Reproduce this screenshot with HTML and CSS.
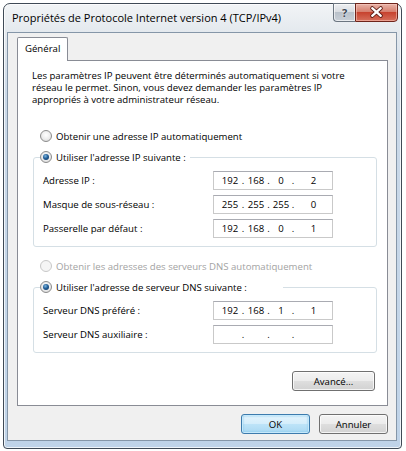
FILE: index.html
```html
<!DOCTYPE html>
<html lang="fr">
<head>
<meta charset="utf-8">
<title>Propriétés de Protocole Internet version 4 (TCP/IPv4)</title>
<link rel="stylesheet" href="styles.css">
</head>
<body>
<div class="window">
  <div class="titlebar">
    <span class="title">Propriétés de Protocole Internet version 4 (TCP/IPv4)</span>
    <div class="caption">
      <div class="cb help">?</div>
      <div class="cb close">
        <svg width="43" height="19" viewBox="0 0 43 19" aria-hidden="true">
          <path d="M17 5 L26 13 M26 5 L17 13" stroke="#5a1a12" stroke-width="4.2" stroke-linecap="round" fill="none"/>
          <path d="M17 5 L26 13 M26 5 L17 13" stroke="#ffffff" stroke-width="2.4" stroke-linecap="round" fill="none"/>
        </svg>
      </div>
    </div>
  </div>
  <div class="client">
    <div class="tabs"><div class="tab">Général</div></div>
    <div class="panel">
      <p class="intro">Les paramètres IP peuvent être déterminés automatiquement si votre<br>réseau le permet. Sinon, vous devez demander les paramètres IP<br>appropriés à votre administrateur réseau.</p>

      <div class="radio-row first"><span class="radio"></span><span>Obtenir une adresse IP automatiquement</span></div>

      <fieldset class="group">
        <legend><span class="radio checked"></span><span>Utiliser l'adresse IP suivante :</span></legend>
        <div class="rows">
          <div class="field"><span>Adresse IP :</span>
            <div class="ip"><span>192</span><span class="dot">.</span><span>168</span><span class="dot">.</span><span>0</span><span class="dot">.</span><span>2</span></div></div>
          <div class="field"><span>Masque de sous-réseau :</span>
            <div class="ip"><span>255</span><span class="dot">.</span><span>255</span><span class="dot">.</span><span>255</span><span class="dot">.</span><span>0</span></div></div>
          <div class="field"><span>Passerelle par défaut :</span>
            <div class="ip"><span>192</span><span class="dot">.</span><span>168</span><span class="dot">.</span><span>0</span><span class="dot">.</span><span>1</span></div></div>
        </div>
      </fieldset>

      <div class="radio-row dns disabled"><span class="radio off"></span><span>Obtenir les adresses des serveurs DNS automatiquement</span></div>

      <fieldset class="group">
        <legend class="wide"><span class="radio checked"></span><span>Utiliser l'adresse de serveur DNS suivante :</span></legend>
        <div class="rows">
          <div class="field"><span>Serveur DNS préféré :</span>
            <div class="ip"><span>192</span><span class="dot">.</span><span>168</span><span class="dot">.</span><span>1</span><span class="dot">.</span><span>1</span></div></div>
          <div class="field"><span>Serveur DNS auxiliaire :</span>
            <div class="ip"><span></span><span class="dot">.</span><span></span><span class="dot">.</span><span></span><span class="dot">.</span><span></span></div></div>
        </div>
      </fieldset>

      <div class="adv-row"><button class="btn adv">Avancé...</button></div>
    </div>
    <div class="footer">
      <button class="btn default">OK</button>
      <button class="btn">Annuler</button>
    </div>
  </div>
</div>
</body>
</html>
```

FILE: styles.css
```css
* { box-sizing: border-box; }
html, body { margin: 0; padding: 0; }
body {
  width: 406px;
  height: 451px;
  overflow: hidden;
  background: #ffffff;
  font-family: "Open Sans", "Noto Sans", sans-serif;
  font-size: 9.6px;
  color: #000;
}

.window {
  margin: 3px 0 0 3px;
  width: 399px;
  height: 446px;
  border: 1px solid #3f4a56;
  border-radius: 7px 7px 4px 4px;
  background: linear-gradient(180deg, #f2f4f6 0px, #e4e9ee 28px, #cbd9e8 90px, #bfd3e8 100%);
  box-shadow: inset 0 0 0 1px rgba(255,255,255,0.75);
  display: flex;
  flex-direction: column;
}

.titlebar {
  height: 28px;
  display: flex;
  align-items: flex-start;
  flex: none;
}
.title {
  flex: 1;
  padding-left: 8px;
  line-height: 28px;
  font-size: 11px;
  color: #000;
  white-space: nowrap;
}
.caption {
  display: flex;
  margin: -1px 3px 0 0;
}
.cb {
  height: 19px;
  display: flex;
  align-items: center;
  justify-content: center;
}
.help {
  width: 22px;
  border: 1px solid #6b7580;
  border-right: none;
  border-radius: 0 0 0 4px;
  background: linear-gradient(180deg, #eef0f2 0%, #d9dde2 45%, #b9c1ca 50%, #c9d0d8 100%);
  box-shadow: inset 0 0 0 1px rgba(255,255,255,0.6);
  font-weight: bold;
  font-size: 11px;
  color: #3c4652;
  text-shadow: 0 0 2px #fff;
}
.close {
  width: 43px;
  border: 1px solid #6e241b;
  border-radius: 0 0 4px 0;
  background: linear-gradient(180deg, #e8b3a8 0%, #d7806f 45%, #c7432f 50%, #d6705c 100%);
  box-shadow: inset 0 0 0 1px rgba(255,210,200,0.5);
}
.close svg { display: block; }

.client {
  margin: 0 4px 0 3px;
  width: 390px;
  height: 409px;
  flex: none;
  background: #f0f0f0;
  border: 1px solid #8596a8;
  padding: 4px 8px 0 9px;
}

.tabs {
  display: flex;
  margin-bottom: -1px;
}
.tab {
  position: relative;
  z-index: 1;
  width: 51px;
  height: 24px;
  background: #fff;
  border: 1px solid #898c95;
  border-bottom: none;
  border-radius: 2px 2px 0 0;
  padding: 4px 0 0 7px;
  line-height: 14px;
}

.panel {
  background: #fff;
  border: 1px solid #898c95;
  padding: 0 0 14px 0;
}

.intro {
  margin: 9px 0 0 14px;
  line-height: 12px;
}

.radio-row {
  display: flex;
  align-items: center;
  gap: 4px;
  height: 14px;
  padding-left: 22px;
}
.radio-row.first { margin-top: 23px; }
.radio-row.dns { margin-top: 12px; }
.radio-row.disabled { color: #a3a3a3; }

.radio {
  flex: none;
  width: 12px;
  height: 12px;
  border-radius: 50%;
  border: 1px solid #8c8c8c;
  background: radial-gradient(circle at 50% 40%, #ffffff 0%, #ececec 55%, #cdcdcd 100%);
}
.radio.checked::after {
  content: "";
  display: block;
  width: 6px;
  height: 6px;
  margin: 2px;
  border-radius: 50%;
  background: radial-gradient(circle at 40% 35%, #7fb8e0 0%, #245f98 45%, #0c3159 100%);
}
.radio.off {
  border-color: #c8c8c8;
  background: #f5f5f5;
}

.group {
  margin: 7px 10px 0 15px;
  padding: 7px 0 8px 6px;
  border: 1px solid #d5dfe5;
  border-radius: 3px;
  min-width: 0;
}
.group legend {
  display: flex;
  align-items: center;
  gap: 4px;
  height: 14px;
  padding: 0 4px 0 0;
}
.group legend.wide { padding-right: 36px; }

.rows {
  display: flex;
  flex-direction: column;
  gap: 5px;
  padding-left: 3px;
}
.field {
  display: grid;
  grid-template-columns: 170px 120px;
  align-items: center;
  height: 19px;
}
.ip {
  height: 19px;
  border: 1px solid #c9c9c9;
  border-top-color: #a9abb2;
  background: #fff;
  display: grid;
  grid-template-columns: 20px 6px 20px 5px 20px 4px 1fr;
  align-items: center;
  padding-left: 6px;
  line-height: 17px;
}
.ip span { text-align: center; }

.adv-row {
  display: flex;
  justify-content: flex-end;
  margin: 18px 12px 0 0;
}

.btn {
  height: 20px;
  width: 69px;
  padding: 0;
  font: inherit;
  color: #000;
  border: 1px solid #707070;
  border-radius: 3px;
  background: linear-gradient(180deg, #f4f4f4 0%, #ececec 48%, #dedede 52%, #d2d2d2 100%);
  box-shadow: inset 0 0 0 1px rgba(255,255,255,0.75);
}
.btn.adv { width: 83px; }
.btn.default {
  border-color: #3d7bad;
  background: linear-gradient(180deg, #e5f4fc 0%, #d4edfb 48%, #bde3f8 52%, #a9d8f2 100%);
  box-shadow: inset 0 0 0 1px #c6e9fb, inset 0 0 2px 1px #7fc4ec;
}

.footer {
  display: flex;
  justify-content: flex-end;
  gap: 9px;
  margin-top: 8px;
}
```
